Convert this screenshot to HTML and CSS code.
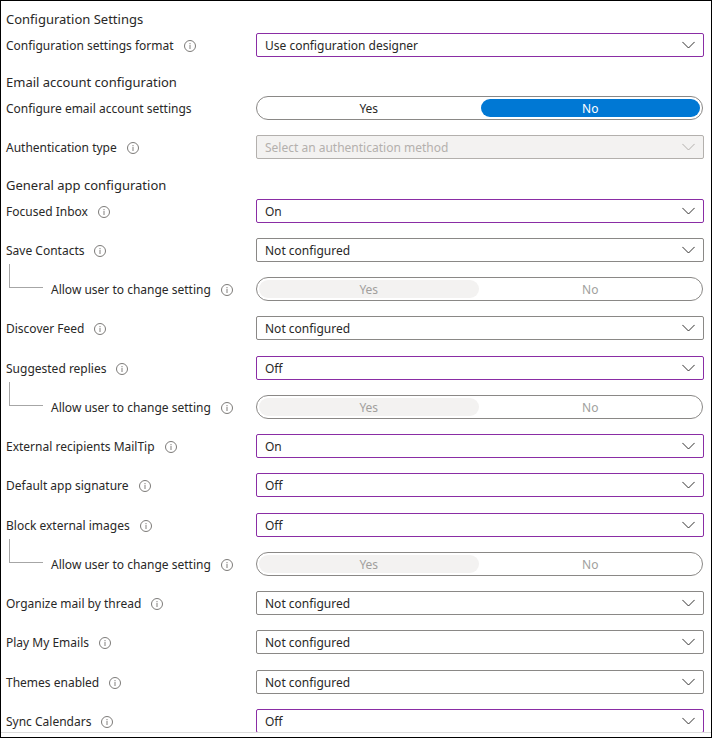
FILE: index.html
```html
<!DOCTYPE html>
<html lang="en">
<head>
<meta charset="utf-8">
<meta name="viewport" content="width=device-width, initial-scale=1">
<title>Configuration Settings</title>
<link rel="stylesheet" href="styles.css">
</head>
<body>
<svg class="sprite" aria-hidden="true">
  <symbol id="info" viewBox="0 0 12 12">
    <circle cx="6" cy="6" r="5.5" fill="none" stroke="#7c7a78"/>
    <path d="M6 3v1.2M6 5v4" fill="none" stroke="#979593" stroke-width="1.2"/>
  </symbol>
  <symbol id="chevron" viewBox="0 0 13 8">
    <path d="M.4.9 6.5 7 12.6.9" fill="none" stroke="currentColor"/>
  </symbol>
</svg>
<main class="panel">
  <form>
    <section class="group">
      <h2>Configuration Settings</h2>
      <div class="row">
        <div class="name"><label for="format">Configuration settings format</label><button type="button" class="info" aria-label="More info"><svg><use href="#info"/></svg></button></div>
        <div class="select changed"><select id="format"><option>Use configuration designer</option><option>Enter JSON data</option></select><svg><use href="#chevron"/></svg></div>
      </div>
    </section>

    <section class="group">
      <h2>Email account configuration</h2>
      <div class="row">
        <div class="name"><span id="email">Configure email account settings</span></div>
        <div class="toggle" role="radiogroup" aria-labelledby="email">
          <label><input type="radio" name="email"><span>Yes</span></label>
          <label><input type="radio" name="email" checked><span>No</span></label>
        </div>
      </div>
      <div class="row">
        <div class="name"><label for="auth">Authentication type</label><button type="button" class="info" aria-label="More info"><svg><use href="#info"/></svg></button></div>
        <div class="select"><select id="auth" disabled><option>Select an authentication method</option></select><svg><use href="#chevron"/></svg></div>
      </div>
    </section>

    <section class="group general">
      <h2>General app configuration</h2>
      <div class="row">
        <div class="name"><label for="focused">Focused Inbox</label><button type="button" class="info" aria-label="More info"><svg><use href="#info"/></svg></button></div>
        <div class="select changed"><select id="focused"><option>On</option><option>Off</option><option>Not configured</option></select><svg><use href="#chevron"/></svg></div>
      </div>
      <div class="row">
        <div class="name"><label for="contacts">Save Contacts</label><button type="button" class="info" aria-label="More info"><svg><use href="#info"/></svg></button></div>
        <div class="select"><select id="contacts"><option>Not configured</option><option>On</option><option>Off</option></select><svg><use href="#chevron"/></svg></div>
      </div>
      <div class="row child">
        <div class="name"><span id="allow-contacts">Allow user to change setting</span><button type="button" class="info" aria-label="More info"><svg><use href="#info"/></svg></button></div>
        <div class="toggle" role="radiogroup" aria-labelledby="allow-contacts">
          <label><input type="radio" name="allow-contacts" checked disabled><span>Yes</span></label>
          <label><input type="radio" name="allow-contacts" disabled><span>No</span></label>
        </div>
      </div>
      <div class="row">
        <div class="name"><label for="feed">Discover Feed</label><button type="button" class="info" aria-label="More info"><svg><use href="#info"/></svg></button></div>
        <div class="select"><select id="feed"><option>Not configured</option><option>On</option><option>Off</option></select><svg><use href="#chevron"/></svg></div>
      </div>
      <div class="row">
        <div class="name"><label for="replies">Suggested replies</label><button type="button" class="info" aria-label="More info"><svg><use href="#info"/></svg></button></div>
        <div class="select changed"><select id="replies"><option>Off</option><option>On</option><option>Not configured</option></select><svg><use href="#chevron"/></svg></div>
      </div>
      <div class="row child">
        <div class="name"><span id="allow-replies">Allow user to change setting</span><button type="button" class="info" aria-label="More info"><svg><use href="#info"/></svg></button></div>
        <div class="toggle" role="radiogroup" aria-labelledby="allow-replies">
          <label><input type="radio" name="allow-replies" checked disabled><span>Yes</span></label>
          <label><input type="radio" name="allow-replies" disabled><span>No</span></label>
        </div>
      </div>
      <div class="row">
        <div class="name"><label for="mailtip">External recipients MailTip</label><button type="button" class="info" aria-label="More info"><svg><use href="#info"/></svg></button></div>
        <div class="select changed"><select id="mailtip"><option>On</option><option>Off</option><option>Not configured</option></select><svg><use href="#chevron"/></svg></div>
      </div>
      <div class="row">
        <div class="name"><label for="signature">Default app signature</label><button type="button" class="info" aria-label="More info"><svg><use href="#info"/></svg></button></div>
        <div class="select changed"><select id="signature"><option>Off</option><option>On</option><option>Not configured</option></select><svg><use href="#chevron"/></svg></div>
      </div>
      <div class="row">
        <div class="name"><label for="images">Block external images</label><button type="button" class="info" aria-label="More info"><svg><use href="#info"/></svg></button></div>
        <div class="select changed"><select id="images"><option>Off</option><option>On</option><option>Not configured</option></select><svg><use href="#chevron"/></svg></div>
      </div>
      <div class="row child">
        <div class="name"><span id="allow-images">Allow user to change setting</span><button type="button" class="info" aria-label="More info"><svg><use href="#info"/></svg></button></div>
        <div class="toggle" role="radiogroup" aria-labelledby="allow-images">
          <label><input type="radio" name="allow-images" checked disabled><span>Yes</span></label>
          <label><input type="radio" name="allow-images" disabled><span>No</span></label>
        </div>
      </div>
      <div class="row">
        <div class="name"><label for="thread">Organize mail by thread</label><button type="button" class="info" aria-label="More info"><svg><use href="#info"/></svg></button></div>
        <div class="select"><select id="thread"><option>Not configured</option><option>On</option><option>Off</option></select><svg><use href="#chevron"/></svg></div>
      </div>
      <div class="row">
        <div class="name"><label for="play">Play My Emails</label><button type="button" class="info" aria-label="More info"><svg><use href="#info"/></svg></button></div>
        <div class="select"><select id="play"><option>Not configured</option><option>On</option><option>Off</option></select><svg><use href="#chevron"/></svg></div>
      </div>
      <div class="row">
        <div class="name"><label for="themes">Themes enabled</label><button type="button" class="info" aria-label="More info"><svg><use href="#info"/></svg></button></div>
        <div class="select"><select id="themes"><option>Not configured</option><option>On</option><option>Off</option></select><svg><use href="#chevron"/></svg></div>
      </div>
      <div class="row">
        <div class="name"><label for="calendars">Sync Calendars</label><button type="button" class="info" aria-label="More info"><svg><use href="#info"/></svg></button></div>
        <div class="select changed"><select id="calendars"><option>Off</option><option>On</option><option>Not configured</option></select><svg><use href="#chevron"/></svg></div>
      </div>
    </section>
  </form>
</main>
</body>
</html>
```
FILE: styles.css
```css
* {
  box-sizing: border-box;
}

body {
  display: flex;
  flex-direction: column;
  height: 100vh;
  margin: 0;
  padding-bottom: 4px;
  border: 1px solid #000;
  background: #fff;
  color: #292827;
  font: 12px/16px "Segoe UI", "Noto Sans", sans-serif;
}

.sprite {
  position: absolute;
  width: 0;
  height: 0;
}

.panel {
  flex: 1;
  min-height: 0;
  overflow: hidden;
  padding: 8px 7px 0 5px;
  border-bottom: 1px solid #dcdcdc;
}

.group {
  margin-bottom: 15px;
}

h2 {
  margin: 0 0 4px;
  font-size: 13px;
  font-weight: 400;
  line-height: 20px;
}

.row {
  display: grid;
  grid-template-columns: 250px 1fr;
  align-items: center;
  height: 24px;
}

.row + .row {
  margin-top: 15px;
}

.general,
.general .row:nth-of-type(4n + 5) {
  margin-top: 16px;
}

.name {
  display: flex;
  align-items: center;
  gap: 10px;
  padding-top: 2px;
}

.child .name::before {
  content: "";
  align-self: flex-start;
  width: 33px;
  height: 23px;
  margin: -18px -2px 0 3px;
  border: solid #a6a6a6;
  border-width: 0 0 1px 1px;
}

.info {
  display: flex;
  padding: 0;
  border: 0;
  background: none;
}

.info svg {
  width: 12px;
  height: 12px;
}

.select {
  display: grid;
  align-items: center;
}

.select select,
.select svg {
  grid-area: 1 / 1;
}

.select svg {
  justify-self: end;
  width: 13px;
  height: 8px;
  margin-right: 9px;
  color: #323130;
  pointer-events: none;
}

select {
  appearance: none;
  width: 100%;
  height: 24px;
  margin: 0;
  padding: 2px 30px 0 8px;
  border: 1px solid #8a8886;
  border-radius: 2px;
  background: #fff;
  color: inherit;
  font: inherit;
}

.changed select {
  border-color: #8a2da5;
}

select:disabled {
  border-color: #b3b0ad;
  background: #f3f2f1;
  color: #b3b0ad;
  opacity: 1;
}

select:disabled + svg {
  color: #b3b0ad;
}

.toggle {
  display: flex;
  gap: 2px;
  height: 24px;
  margin-right: 1px;
  padding: 2px;
  border: 1px solid #8a8886;
  border-radius: 12px;
}

.toggle label {
  display: grid;
  flex: 1;
}

.toggle input,
.toggle span {
  grid-area: 1 / 1;
}

.toggle input {
  appearance: none;
  margin: 0;
  border-radius: 9px;
}

.toggle input:checked {
  background: #0078d4;
}

.toggle input:checked:disabled {
  background: #f3f2f1;
}

.toggle span {
  z-index: 1;
  padding-top: 2px;
  text-align: center;
}

.toggle input:checked + span {
  color: #fff;
}

.toggle input:disabled + span {
  color: #a19f9d;
}
```
